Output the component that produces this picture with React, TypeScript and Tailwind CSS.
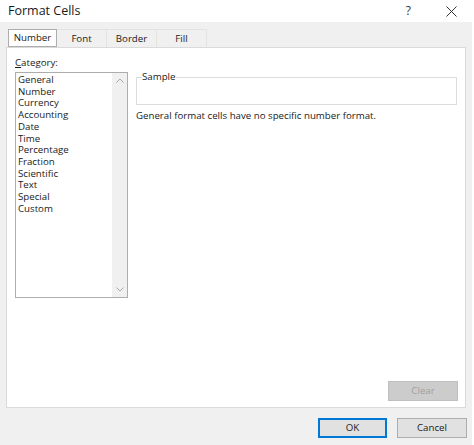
import React from 'react';

const categories = [
  'General',
  'Number',
  'Currency',
  'Accounting',
  'Date',
  'Time',
  'Percentage',
  'Fraction',
  'Scientific',
  'Text',
  'Special',
  'Custom',
];

const tabs = ['Number', 'Font', 'Border', 'Fill'];

const font = { fontFamily: '"Open Sans", Lato, sans-serif' };

export default function App() {
  return (
    <div className="flex h-[445px] w-[474px] flex-col bg-white text-[#1a1a1a]" style={font}>
      {/* title bar */}
      <div className="flex h-[22px] items-center bg-white pl-[8px]">
        <span className="text-[12.5px] leading-none">Format Cells</span>
        <span className="ml-auto mr-[35px] text-[12px] leading-none text-[#333]">?</span>
        <svg width="11" height="11" viewBox="0 0 11 11" className="mr-[17px]">
          <path d="M0.5 0.5 L10.5 10.5 M10.5 0.5 L0.5 10.5" stroke="#333" strokeWidth="1" />
        </svg>
      </div>

      <div className="mr-[2px] flex flex-1 flex-col bg-[#f0f0f0] pt-[7px]">
        {/* tabs */}
        <div className="flex h-[18px] pl-[8px]">
          {tabs.map((t, i) => (
            <div
              key={t}
              className={
                i === 0
                  ? 'flex w-[49px] items-center justify-center border border-[#adadad] bg-white text-[9.7px] leading-none'
                  : 'flex w-[50px] items-center justify-center border-r border-t border-[#e3e3e3] bg-[#f0f0f0] text-[9.7px] leading-none'
              }
            >
              {t}
            </div>
          ))}
        </div>

        {/* panel */}
        <div className="ml-[6px] flex h-[361px] w-[460px] flex-col border border-[#dadada] bg-white">
          <div className="flex">
            <div className="flex flex-col pl-[8px] pt-[8px]">
              <span className="text-[9.7px] leading-[14px]">
                <span className="underline">C</span>ategory:
              </span>
              <div className="mt-[2px] flex h-[226px] w-[113px] border border-[#adadad]">
                <ul className="flex-1 pl-[2px] pt-[1px] text-[9.7px] leading-[11.7px]">
                  {categories.map((c) => (
                    <li key={c}>{c}</li>
                  ))}
                </ul>
                <div className="flex w-[15px] flex-col items-center justify-between bg-[#f0f0f0] py-[5px]">
                  <svg width="8" height="5" viewBox="0 0 8 5">
                    <path d="M0.5 4.5 L4 1 L7.5 4.5" fill="none" stroke="#a6a6a6" strokeWidth="1" />
                  </svg>
                  <svg width="8" height="5" viewBox="0 0 8 5">
                    <path d="M0.5 0.5 L4 4 L7.5 0.5" fill="none" stroke="#a6a6a6" strokeWidth="1" />
                  </svg>
                </div>
              </div>
            </div>

            <div className="ml-[8px] flex flex-col pt-[29px]">
              <div className="relative h-[28px] w-[321px] border border-[#dcdcdc]">
                <span className="absolute left-[5px] top-[-8px] bg-white pr-[1px] text-[9.7px] leading-[14px]">
                  Sample
                </span>
              </div>
              <p className="mt-[4px] text-[9.7px] leading-[14px]">
                General format cells have no specific number format.
              </p>
            </div>
          </div>

          <div className="mb-[6px] mr-[7px] mt-auto flex justify-end">
            <div className="flex h-[20px] w-[70px] items-center justify-center border border-[#bfbfbf] bg-[#cccccc] text-[9.7px] text-[#a0a0a0]">
              Clear
            </div>
          </div>
        </div>

        {/* buttons */}
        <div className="mt-[10px] flex justify-end gap-[10px] pr-[5px]">
          <button className="flex h-[20px] w-[69px] items-center justify-center border-2 border-[#0078d7] bg-[#e1e1e1] text-[9.7px]">
            OK
          </button>
          <button className="flex h-[20px] w-[70px] items-center justify-center border border-[#adadad] bg-[#e1e1e1] text-[9.7px]">
            Cancel
          </button>
        </div>
      </div>
    </div>
  );
}
